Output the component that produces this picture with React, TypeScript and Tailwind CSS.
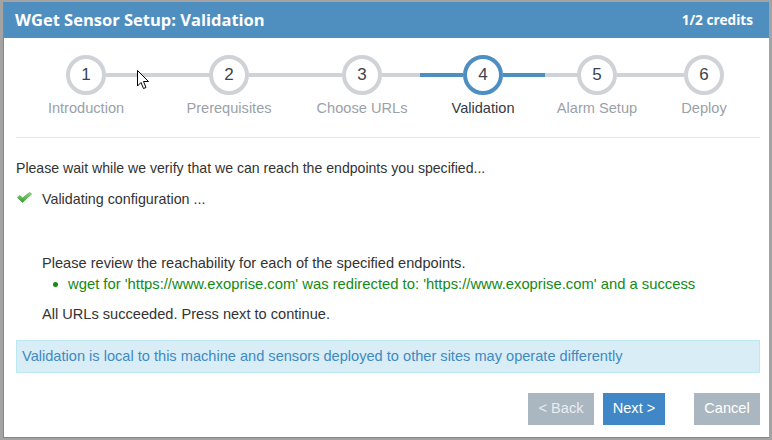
import React from 'react';

const steps = [
  { n: 1, label: 'Introduction' },
  { n: 2, label: 'Prerequisites' },
  { n: 3, label: 'Choose URLs' },
  { n: 4, label: 'Validation', active: true },
  { n: 5, label: 'Alarm Setup' },
  { n: 6, label: 'Deploy' },
];

function Step({ n, label, active }: { n: number; label: string; active?: boolean }) {
  return (
    <div className="flex w-10 shrink-0 flex-col items-center">
      <div
        className={`flex h-10 w-10 items-center justify-center rounded-full border-4 bg-white text-[17px] text-[#3b4350] ${
          active ? 'border-[#4e8fc2]' : 'border-[#cfd2d6]'
        }`}
      >
        {n}
      </div>
      <div className={`mt-[5px] whitespace-nowrap text-[14.6px] leading-4 ${active ? 'text-[#333a45]' : 'text-[#9ba1a9]'}`}>
        {label}
      </div>
    </div>
  );
}

function Line({ gray = 0, blue = 0, blueFirst = false }: { gray?: number; blue?: number; blueFirst?: boolean }) {
  const g = <div className="h-1 bg-[#cfd2d6]" style={{ width: gray }} />;
  const b = <div className="h-1 bg-[#4e8fc2]" style={{ width: blue }} />;
  return <div className="mt-[18px] flex shrink-0">{blueFirst ? <>{b}{g}</> : <>{g}{b}</>}</div>;
}

function Check() {
  return (
    <svg width="15" height="11" viewBox="0 0 15 11">
      <defs>
        <linearGradient id="ck" x1="0" y1="0" x2="0" y2="1">
          <stop offset="0" stopColor="#8ee07a" />
          <stop offset="1" stopColor="#2e9d2a" />
        </linearGradient>
      </defs>
      <path d="M0.5 5.5 L3 3.5 L5.5 6 L12.5 0.5 L14.5 2 L5.5 10.5 Z" fill="url(#ck)" stroke="#3a9a34" strokeWidth="0.6" strokeLinejoin="round" />
    </svg>
  );
}

export default function App() {
  return (
    <div className="h-[440px] w-[772px] bg-[#a3a3a3] pl-[3px] pr-[3px] pt-[2px] pb-[2px] font-['Liberation_Sans',Arial,sans-serif]">
      <div className="relative flex h-full flex-col border-b border-l border-[#5b8fc0] bg-white">
        {/* Header */}
        <div className="flex h-9 shrink-0 items-center justify-between bg-[#4f8fc0] pl-[11px] pr-4 font-['Open_Sans',sans-serif] font-bold text-white">
          <span className="text-[16.5px]">WGet Sensor Setup: Validation</span>
          <span className="text-[13.6px]">1/2 credits</span>
        </div>

        <div className="flex flex-1 flex-col pl-3 pr-[9px]">
          {/* Steps */}
          <div className="mt-[17px] flex pl-[50px]">
            <Step {...steps[0]} />
            <Line gray={103} />
            <Step {...steps[1]} />
            <Line gray={93} />
            <Step {...steps[2]} />
            <Line gray={38} blue={43} />
            <Step {...steps[3]} />
            <Line gray={32} blue={42} blueFirst />
            <Step {...steps[4]} />
            <Line gray={67} />
            <Step {...steps[5]} />
          </div>
          <div className="mt-[21px] h-px bg-[#e8e8e8]" />

          {/* Body */}
          <div className="mt-[22px] text-[14.1px] leading-4 text-[#333]">
            Please wait while we verify that we can reach the endpoints you specified...
          </div>
          <div className="mt-[15px] flex items-center text-[14.3px] leading-4 text-[#333]">
            <div className="ml-[1px] mr-[10px] -mt-[3px]">
              <Check />
            </div>
            Validating configuration ...
          </div>
          <div className="ml-[26px] mt-[48px] text-[14.6px] leading-4 text-[#333]">
            Please review the reachability for each of the specified endpoints.
          </div>
          <ul className="ml-[26px] mt-[5px] text-[14.8px] leading-4 text-[#138a13]">
            <li className="flex items-center">
              <span className="ml-[11px] mr-[10px] h-[5px] w-[5px] rounded-full bg-[#138a13]" />
              wget for 'https://www.exoprise.com' was redirected to: 'https://www.exoprise.com' and a success
            </li>
          </ul>
          <div className="ml-[26px] mt-[14px] text-[14.6px] leading-4 text-[#333]">
            All URLs succeeded. Press next to continue.
          </div>

          <div className="mt-[18px] flex h-[33px] items-center border border-[#bce8f1] bg-[#d9edf7] pl-[5px] text-[14.6px] text-[#3f8ac2]">
            Validation is local to this machine and sensors deployed to other sites may operate differently
          </div>

          {/* Buttons */}
          <div className="mt-[20px] flex justify-end">
            <button className="h-[32px] w-[66px] bg-[#aab7c1] text-[14.6px] text-[#e8edf1]">&lt; Back</button>
            <button className="ml-[9px] h-[32px] w-[62px] bg-[#3f87c6] text-[14.6px] text-white">Next &gt;</button>
            <button className="ml-[29px] h-[32px] w-[66px] bg-[#aab7c1] text-[14.6px] text-white">Cancel</button>
          </div>
        </div>

        {/* mouse cursor */}
        <svg className="absolute left-[133px] top-[68px]" width="13" height="20" viewBox="0 0 13 20">
          <path d="M0.5 0.5 L0.5 16 L4 12.5 L6.5 18.5 L9 17.5 L6.5 11.5 L11.5 11.5 Z" fill="white" stroke="black" strokeWidth="1" strokeLinejoin="round" />
        </svg>
      </div>
    </div>
  );
}
